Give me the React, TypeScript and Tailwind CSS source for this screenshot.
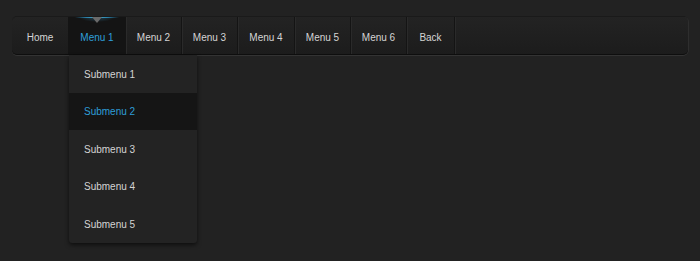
import React from "react";

const items = ["Home", "Menu 1", "Menu 2", "Menu 3", "Menu 4", "Menu 5", "Menu 6", "Back"];
const widths = [57, 57, 56, 56, 57, 56, 56, 48];
const subs = ["Submenu 1", "Submenu 2", "Submenu 3", "Submenu 4", "Submenu 5"];

export default function App() {
  return (
    <div
      className="w-[700px] h-[261px] bg-[#222222] pt-[17px] pl-[12px] overflow-hidden"
      style={{ fontFamily: '"Liberation Sans", Arial, sans-serif' }}
    >
      <div className="relative w-[676px] h-[38px] rounded-[5px] bg-[linear-gradient(#232323,#1c1c1c)] border-b border-[#0e0e0e] shadow-[0_1px_0_#333,1px_0_0_#2e2e2e,0_-1px_0_#1a1a1a] flex">
        {items.map((t, i) => {
          const active = i === 1;
          return (
            <div
              key={t}
              style={{ width: widths[i] }}
              className={
                "relative h-full flex items-center justify-center text-[10px] border-r border-[#141414] shadow-[1px_0_0_#2a2a2a] " +
                (active ? "bg-[#141414] text-[#2e9ed8]" : "text-[#d4d4d4]") +
                (i === 0 ? " rounded-l-[5px]" : "")
              }
            >
              {active && (
                <>
                  <div className="absolute top-0 left-[6px] right-[6px] h-[1px] bg-[linear-gradient(90deg,transparent,#2a8fc0,#5ccff0,#2a8fc0,transparent)] opacity-80" />
                  <div className="absolute top-0 left-[10px] right-[10px] h-[5px] bg-[radial-gradient(ellipse_at_top,rgba(60,170,220,0.35),transparent_70%)]" />
                  <div className="absolute top-0 left-1/2 -translate-x-1/2 w-0 h-0 border-l-[5px] border-r-[5px] border-t-[6px] border-l-transparent border-r-transparent border-t-[#6a6a6a]" />
                </>
              )}
              <span className="mt-[3px]">{t}</span>
            </div>
          );
        })}
        <div className="absolute top-[38px] left-[57px] w-[128px] bg-[#232323] rounded-b-[3px] shadow-[0_2px_4px_rgba(0,0,0,0.6)] flex flex-col">
          {subs.map((s, i) => (
            <div
              key={s}
              className={
                "h-[37.5px] flex items-center pl-[15px] text-[10px] " +
                (i === 1 ? "bg-[#151515] text-[#2e9ed8]" : "text-[#d4d4d4]")
              }
            >
              <span className="mt-[1px]">{s}</span>
            </div>
          ))}
        </div>
      </div>
    </div>
  );
}
